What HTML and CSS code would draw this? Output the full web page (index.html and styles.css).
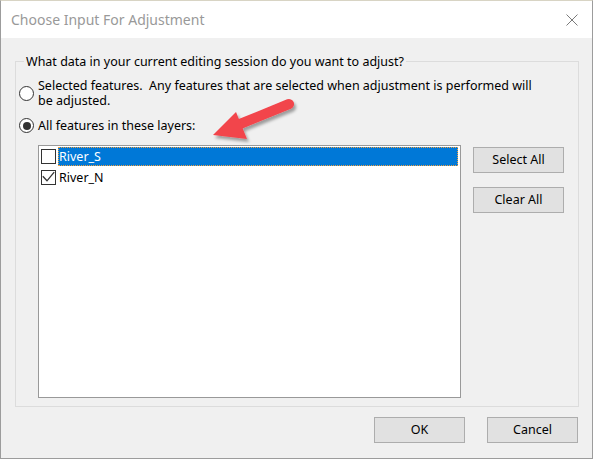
FILE: index.html
```html
<!DOCTYPE html>
<html>
<head>
<meta charset="utf-8">
<title>Choose Input For Adjustment</title>
<link rel="stylesheet" href="styles.css">
</head>
<body>
<div class="window">
  <div class="titlebar">
    <span class="title">Choose Input For Adjustment</span>
    <svg class="close" width="12" height="12" viewBox="0 0 12 12"><path d="M0.5 0.5 L11.5 11.5 M11.5 0.5 L0.5 11.5" stroke="#7a7a7a" stroke-width="1" fill="none"/></svg>
  </div>
  <div class="content">
    <fieldset class="group">
      <legend class="group-title">What data in your current editing session do you want to adjust?</legend>
      <div class="option option-multi">
        <span class="radio"></span>
        <span class="option-label">Selected features.&nbsp; Any features that are selected when adjustment is performed will<br>be adjusted.</span>
      </div>
      <div class="option option-second">
        <span class="radio radio-checked"></span>
        <span class="option-label">All features in these layers:</span>
      </div>
      <div class="layers">
        <div class="listbox">
          <div class="item">
            <span class="check"></span>
            <span class="item-name item-selected">River_S</span>
          </div>
          <div class="item">
            <span class="check"><svg width="13" height="13" viewBox="0 0 13 13"><path d="M0.8 5.2 L5 9.8 L12.2 1.2" stroke="#333" stroke-width="1.3" fill="none"/></svg></span>
            <span class="item-name">River_N</span>
          </div>
        </div>
        <div class="side-buttons">
          <button class="btn">Select All</button>
          <button class="btn">Clear All</button>
        </div>
      </div>
    </fieldset>
    <div class="footer">
      <button class="btn">OK</button>
      <button class="btn">Cancel</button>
    </div>
  </div>
  <svg class="arrow" width="100" height="50" viewBox="205 98 100 50">
    <defs>
      <filter id="sh" x="-20%" y="-20%" width="150%" height="160%">
        <feDropShadow dx="2" dy="3" stdDeviation="1.6" flood-color="#000" flood-opacity="0.35"/>
      </filter>
    </defs>
    <g filter="url(#sh)" fill="#f2444b">
      <path d="M289 104 L240 124" stroke="#f2444b" stroke-width="10" stroke-linecap="round"/>
      <polygon points="213,135 236,112 247,139"/>
    </g>
  </svg>
</div>
</body>
</html>
```
FILE: styles.css
```css
* { box-sizing: border-box; }
html, body { margin: 0; padding: 0; }
body {
  font-family: "Noto Sans", "Liberation Sans", sans-serif;
  font-size: 12.5px;
  color: #000;
  background: #f0f0f0;
}
.window {
  position: relative;
  width: 593px;
  height: 459px;
  border: 1px solid #9c9c9c;
  border-top-color: #d8d4c4;
  background: #f0f0f0;
  display: flex;
  flex-direction: column;
}
.titlebar {
  height: 37px;
  background: #fff;
  display: flex;
  align-items: center;
  justify-content: space-between;
  padding: 0 14px 0 10px;
}
.title {
  font-size: 14px;
  color: #999;
  line-height: 20px;
}
.close { display: block; margin-top: 1px; }
.content {
  flex: 1;
  display: flex;
  flex-direction: column;
}
.group {
  margin: 16px 13px 0 14px;
  padding: 9px 13px 8px 3px;
  border: 1px solid #dcdcdc;
  min-width: 0;
}
.group-title {
  margin-left: 5px;
  padding: 0 2px;
  line-height: 15px;
}
.option {
  display: flex;
  align-items: center;
  gap: 4px;
}
.option-label {
  line-height: 15px;
  white-space: nowrap;
}
.option-second { margin-top: 10px; }
.radio {
  width: 15px;
  height: 15px;
  border: 1px solid #333;
  border-radius: 50%;
  background: #fff;
  display: flex;
  align-items: center;
  justify-content: center;
  flex: none;
}
.radio-checked::after {
  content: "";
  width: 8px;
  height: 8px;
  border-radius: 50%;
  background: #333;
}
.layers {
  display: flex;
  gap: 12px;
  margin-top: 12px;
  margin-left: 19px;
}
.listbox {
  width: 423px;
  height: 253px;
  border: 1px solid #999;
  background: #fff;
  padding: 0 2px;
}
.item {
  height: 21px;
  display: flex;
  align-items: center;
  gap: 2px;
}
.check {
  width: 15px;
  height: 15px;
  border: 1px solid #333;
  background: #fff;
  flex: none;
  display: flex;
}
.item-name {
  flex: 1;
  height: 19px;
  line-height: 19px;
  padding-left: 1px;
}
.item-selected {
  background: #0078d7;
  color: #fff;
  outline: 1px dotted #f0a040;
  outline-offset: -1px;
}
.side-buttons {
  display: flex;
  flex-direction: column;
  gap: 14px;
  margin-top: 2px;
}
.btn {
  width: 91px;
  height: 26px;
  background: #e1e1e1;
  border: 1px solid #adadad;
  font-family: "Noto Sans", "Liberation Sans", sans-serif;
  font-size: 12.5px;
  color: #000;
  padding: 0;
  line-height: 22px;
}
.footer {
  display: flex;
  justify-content: flex-end;
  gap: 22px;
  margin-top: 10px;
  padding-right: 14px;
}
.arrow {
  position: absolute;
  left: 204px;
  top: 97px;
  overflow: visible;
}
```
